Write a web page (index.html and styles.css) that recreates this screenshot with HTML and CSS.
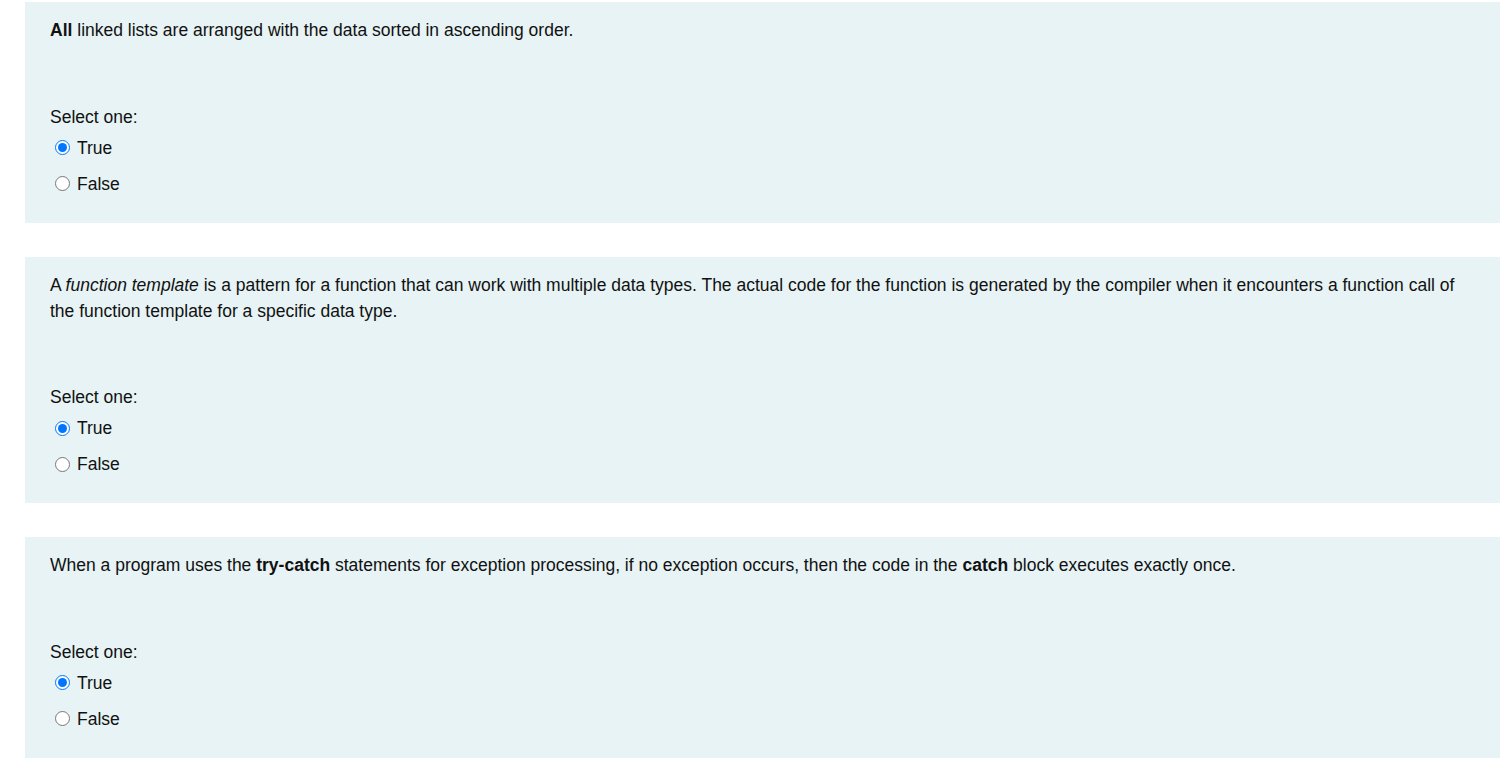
FILE: index.html
```html
<!DOCTYPE html>
<html>
<head>
<meta charset="utf-8">
<link rel="stylesheet" href="styles.css">
</head>
<body>
<div class="page">
  <div class="que">
    <div class="qtext"><b>All</b> linked lists are arranged with the data sorted in ascending order.</div>
    <div class="prompt">Select one:</div>
    <div class="answer">
      <label class="opt"><input type="radio" name="q1" checked><span>True</span></label>
      <label class="opt"><input type="radio" name="q1"><span>False</span></label>
    </div>
  </div>
  <div class="que">
    <div class="qtext">A <i>function template</i> is a pattern for a function that can work with multiple data types. The actual code for the function is generated by the compiler when it encounters a function call of the function template for a specific data type.</div>
    <div class="prompt">Select one:</div>
    <div class="answer">
      <label class="opt"><input type="radio" name="q2" checked><span>True</span></label>
      <label class="opt"><input type="radio" name="q2"><span>False</span></label>
    </div>
  </div>
  <div class="que">
    <div class="qtext">When a program uses the <b>try-catch</b> statements for exception processing, if no exception occurs, then the code in the <b>catch</b> block executes exactly once.</div>
    <div class="prompt">Select one:</div>
    <div class="answer">
      <label class="opt"><input type="radio" name="q3" checked><span>True</span></label>
      <label class="opt"><input type="radio" name="q3"><span>False</span></label>
    </div>
  </div>
</div>
</body>
</html>
```
FILE: styles.css
```css
html, body {
  margin: 0;
  padding: 0;
  background: #ffffff;
}
body {
  font-family: "Liberation Sans", Arial, sans-serif;
  font-size: 17.5px;
  color: #111111;
}
.page {
  padding: 2px 8px 0 25px;
  display: flex;
  flex-direction: column;
  gap: 34px;
}
.que {
  background: #e7f3f5;
  padding: 15px 25px 21px 25px;
}
.qtext {
  line-height: 26px;
  margin-bottom: 60.5px;
}
.prompt {
  line-height: 26px;
}
.answer {
  display: flex;
  flex-direction: column;
}
.opt {
  display: flex;
  align-items: center;
  height: 36px;
  line-height: 26px;
}
.opt input {
  width: 15px;
  height: 15px;
  margin: 0 7px 0 5px;
}
```
